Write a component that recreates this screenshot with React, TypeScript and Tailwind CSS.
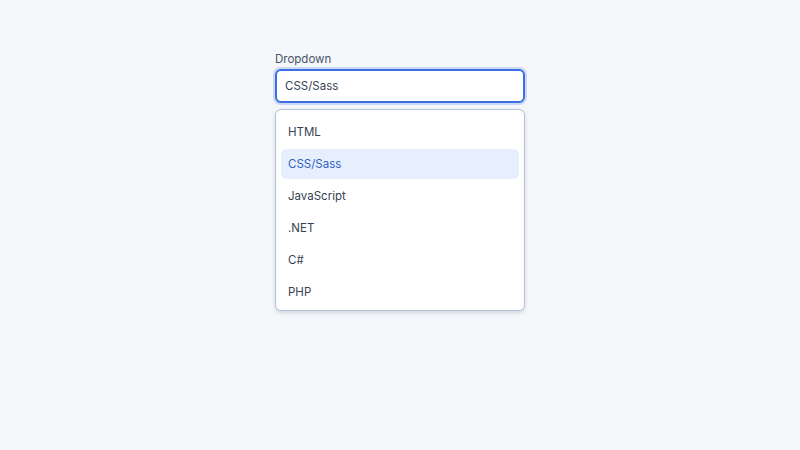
export default function App() {
  const items = ["HTML", "CSS/Sass", "JavaScript", ".NET", "C#", "PHP"];
  return (
    <div
      className="w-[800px] h-[450px] bg-[#f5f7fb] flex justify-center"
      style={{ fontFamily: "Inter, 'Noto Sans', sans-serif" }}
    >
      <div className="w-[250px] mt-[52px] flex flex-col">
        <div className="text-[11.5px] leading-[14px] text-[#475569] mb-[3px]">Dropdown</div>
        <div className="h-[34px] rounded-[6px] border-2 border-[#3c6ee0] bg-white ring-[2px] ring-[#c9d8f7] flex items-center px-[8px] pt-[2px] text-[11.5px] text-[#334155]">
          CSS/Sass
        </div>
        <div className="mt-[6px] rounded-[6px] border border-[#b4c0d3] bg-white shadow-[0_2px_4px_rgba(100,116,139,0.25)] px-[5px] pt-[7px] pb-[3px] flex flex-col gap-[2px]">
          {items.map((it) => (
            <div
              key={it}
              className={
                it === "CSS/Sass"
                  ? "h-[30px] rounded-[5px] bg-[#e8effc] text-[#2f5fc4] flex items-center px-[7px] pt-[2px] text-[11.5px]"
                  : "h-[30px] rounded-[5px] text-[#374151] flex items-center px-[7px] pt-[2px] text-[11.5px]"
              }
            >
              {it}
            </div>
          ))}
        </div>
      </div>
    </div>
  );
}
